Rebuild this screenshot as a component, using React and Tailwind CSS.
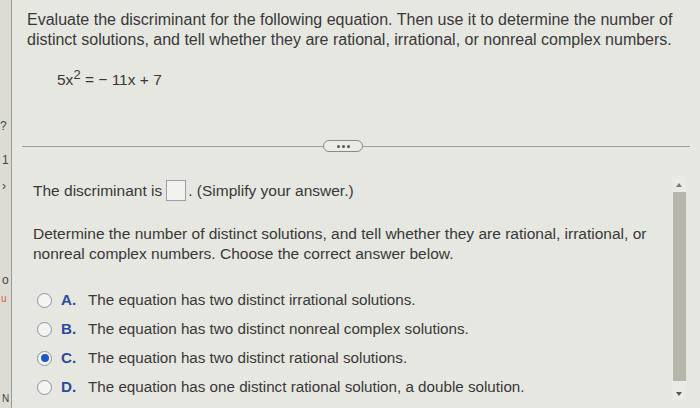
import React from "react";

function Radio({ checked }) {
  return (
    <span className="relative flex h-[15px] w-[15px] shrink-0 items-center justify-center rounded-full border-[1.5px] border-[#8993aa] bg-[#f4f4f0]">
      {checked && <span className="h-[8px] w-[8px] rounded-full bg-[#1f56c8]" />}
    </span>
  );
}

const options = [
  { l: "A.", t: "The equation has two distinct irrational solutions." },
  { l: "B.", t: "The equation has two distinct nonreal complex solutions." },
  { l: "C.", t: "The equation has two distinct rational solutions.", c: true },
  { l: "D.", t: "The equation has one distinct rational solution, a double solution." },
];

export default function App() {
  return (
    <div
      className="flex h-[408px] w-[700px] overflow-hidden bg-[#e7e7e1] text-[#383838]"
      style={{ fontFamily: '"Liberation Sans", Arial, sans-serif' }}
    >
      {/* left cut-off sidebar */}
      <div className="flex w-[12px] shrink-0 flex-col border-r-[1.5px] border-[#9a9a94] bg-[#dcdcd5] text-[12px] leading-none text-[#444]">
        <div className="mt-[120px]">?</div>
        <div className="mt-[22px] pl-[2px]">1</div>
        <div className="mt-[14px] pl-[2px]">›</div>
        <div className="mt-[82px] pl-[2px]">o</div>
        <div className="mt-[8px] pl-[1px] text-[10px] text-[#d0623a]">u</div>
        <div className="mt-[90px] pl-[2px] text-[10px]">N</div>
      </div>

      <div className="flex min-w-0 flex-1 flex-col">
        {/* question */}
        <div className="pl-[15px] pt-[10px] text-[16px] leading-[20px]">
          <p>Evaluate the discriminant for the following equation. Then use it to determine the number of</p>
          <p>distinct solutions, and tell whether they are rational, irrational, or nonreal complex numbers.</p>
          <p className="mt-[20px] pl-[30px] text-[15.5px]">
            5x<sup className="text-[13px]">2</sup> = − 11x + 7
          </p>
        </div>

        {/* divider */}
        <div className="mt-[50px] flex items-center pl-[10px] pr-[10px]">
          <div className="h-px w-[301px] bg-[#9e9e98]" />
          <div className="flex h-[12px] w-[40px] items-center justify-center gap-[2px] rounded-full border border-[#8a8a86] bg-[#ecece7]">
            <span className="h-[3px] w-[3px] rounded-full bg-[#555]" />
            <span className="h-[3px] w-[3px] rounded-full bg-[#555]" />
            <span className="h-[3px] w-[3px] rounded-full bg-[#555]" />
          </div>
          <div className="h-px flex-1 bg-[#9e9e98]" />
        </div>

        {/* lower section */}
        <div className="flex flex-1">
          <div className="flex-1 pl-[21px] text-[15.5px] leading-[20px]">
            <div className="mt-[28px] flex items-center">
              <span>The discriminant is</span>
              <span className="ml-[4px] inline-block h-[21px] w-[20px] border border-[#9aa0ab] bg-[#f2f2ee]" />
              <span className="ml-[2px]">. (Simplify your answer.)</span>
            </div>
            <p className="mt-[23px]">Determine the number of distinct solutions, and tell whether they are rational, irrational, or</p>
            <p>nonreal complex numbers. Choose the correct answer below.</p>
            <div className="mt-[26px] flex flex-col gap-[9px] text-[15.2px]">
              {options.map((o) => (
                <div key={o.l} className="flex h-[20px] items-center">
                  <span className="ml-[4px]">
                    <Radio checked={o.c} />
                  </span>
                  <span className="ml-[9px] w-[27px] font-bold text-[#2b4a9b]">{o.l}</span>
                  <span>{o.t}</span>
                </div>
              ))}
            </div>
          </div>

          {/* scrollbar */}
          <div className="mr-[14px] mt-[24px] flex w-[14px] flex-col items-center self-start bg-[#ebebe5]">
            <span className="mt-[7px] h-0 w-0 border-x-[3px] border-b-[4px] border-x-transparent border-b-[#777]" />
            <div className="mt-[5px] h-[189px] w-[13px] bg-[#b6b6aa]" />
            <span className="mt-[11px] mb-[4px] h-0 w-0 border-x-[3px] border-t-[4px] border-x-transparent border-t-[#555]" />
          </div>
        </div>
      </div>
    </div>
  );
}
